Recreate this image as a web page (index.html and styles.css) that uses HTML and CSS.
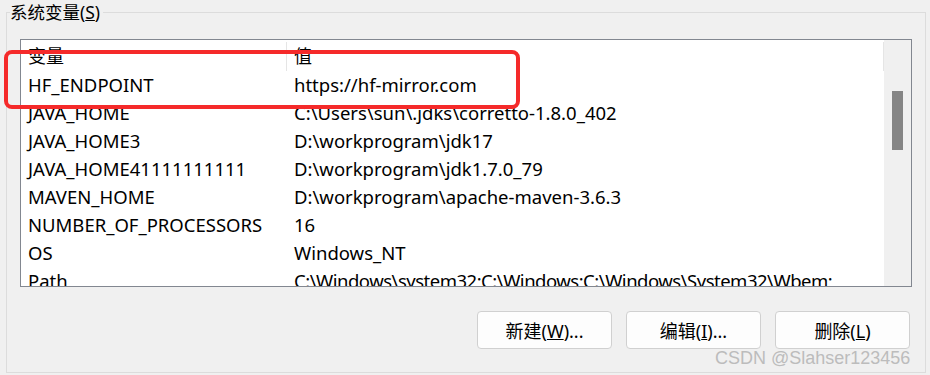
FILE: index.html
```html
<!doctype html>
<html lang="zh-CN">
  <head>
    <meta charset="UTF-8" />
    <title>系统变量</title>
    <link rel="stylesheet" href="styles.css">
  </head>
  <body>
    <fieldset class="group">
      <legend class="group-title">系统变量(<u>S</u>)</legend>

      <div class="list">
        <div class="list-body">
          <div class="list-head">
            <div class="col name">变量</div>
            <div class="col value">值</div>
          </div>
          <div class="row"><div class="col name">HF_ENDPOINT</div><div class="col value">https://hf-mirror.com</div></div>
          <div class="row"><div class="col name">JAVA_HOME</div><div class="col value">C:\Users\sun\.jdks\corretto-1.8.0_402</div></div>
          <div class="row"><div class="col name">JAVA_HOME3</div><div class="col value">D:\workprogram\jdk17</div></div>
          <div class="row"><div class="col name">JAVA_HOME41111111111</div><div class="col value">D:\workprogram\jdk1.7.0_79</div></div>
          <div class="row"><div class="col name">MAVEN_HOME</div><div class="col value">D:\workprogram\apache-maven-3.6.3</div></div>
          <div class="row"><div class="col name">NUMBER_OF_PROCESSORS</div><div class="col value">16</div></div>
          <div class="row"><div class="col name">OS</div><div class="col value">Windows_NT</div></div>
          <div class="row"><div class="col name">Path</div><div class="col value long">C:\Windows\system32;C:\Windows;C:\Windows\System32\Wbem;</div></div>
        </div>
        <div class="scrollbar">
          <div class="thumb"></div>
        </div>
      </div>

      <div class="actions">
        <button class="btn">新建(<u>W</u>)...</button>
        <button class="btn">编辑(<u>I</u>)...</button>
        <button class="btn">删除(<u>L</u>)</button>
      </div>
    </fieldset>

    <!-- hand drawn highlight + watermark sit on top -->
    <div class="highlight"></div>
    <div class="watermark">CSDN @Slahser123456</div>
  </body>
</html>
```

FILE: styles.css
```css
* {
  box-sizing: border-box;
}

body {
  margin: 0;
  width: 930px;
  height: 375px;
  overflow: hidden;
  background: #f0f0f0;
  font-family: "Noto Sans", "Noto Sans CJK SC", sans-serif;
  font-size: 18.5px;
  color: #000;
  position: relative;
}

.group {
  margin: 0 4px 0 6px;
  padding: 15px 13px 23px 13px;
  border: 1px solid #dcdcdc;
  height: 373px;
}

.group-title {
  margin-left: -10px;
  padding: 0 3px 0 0;
  line-height: 24px;
  font-size: 17.5px;
}

.list {
  display: flex;
  height: 248px;
  border: 1px solid #828790;
  background: #fff;
}

.list-body {
  flex: 1;
  overflow: hidden;
}

.list-head,
.row {
  display: flex;
  white-space: nowrap;
}

.list-head {
  height: 31px;
  align-items: center;
  padding-top: 2px;
}

.list-head .col {
  border-right: 1px solid #e5e5e5;
  height: 29px;
  line-height: 29px;
  font-size: 18px;
}

.row {
  height: 28px;
  line-height: 28px;
}

.col {
  padding: 0 7px;
  overflow: hidden;
}

.col.name {
  width: 266px;
  flex: none;
}

.col.value {
  flex: 1;
}

.col.long {
  letter-spacing: -0.5px;
}

.scrollbar {
  width: 27px;
  flex: none;
  background: #f0f0f0;
  padding: 51px 8px 0 8px;
}

.thumb {
  height: 59px;
  background: #858585;
}

.actions {
  display: flex;
  justify-content: flex-end;
  gap: 14px;
  margin-top: 24px;
  padding-right: 2px;
}

.btn {
  width: 135px;
  height: 38px;
  background: #fdfdfd;
  border: 1px solid #d0d0d0;
  border-radius: 4px;
  font-family: inherit;
  font-size: 18px;
  color: #000;
  padding: 0;
}

.highlight {
  position: absolute;
  left: 4px;
  top: 50px;
  width: 516px;
  height: 59px;
  border: 4px solid #f52a2a;
  border-radius: 8px;
}

.watermark {
  position: absolute;
  left: 715px;
  top: 346px;
  font-family: "Liberation Sans", sans-serif;
  font-size: 18px;
  color: #bcbcbc;
  line-height: 24px;
}
```
